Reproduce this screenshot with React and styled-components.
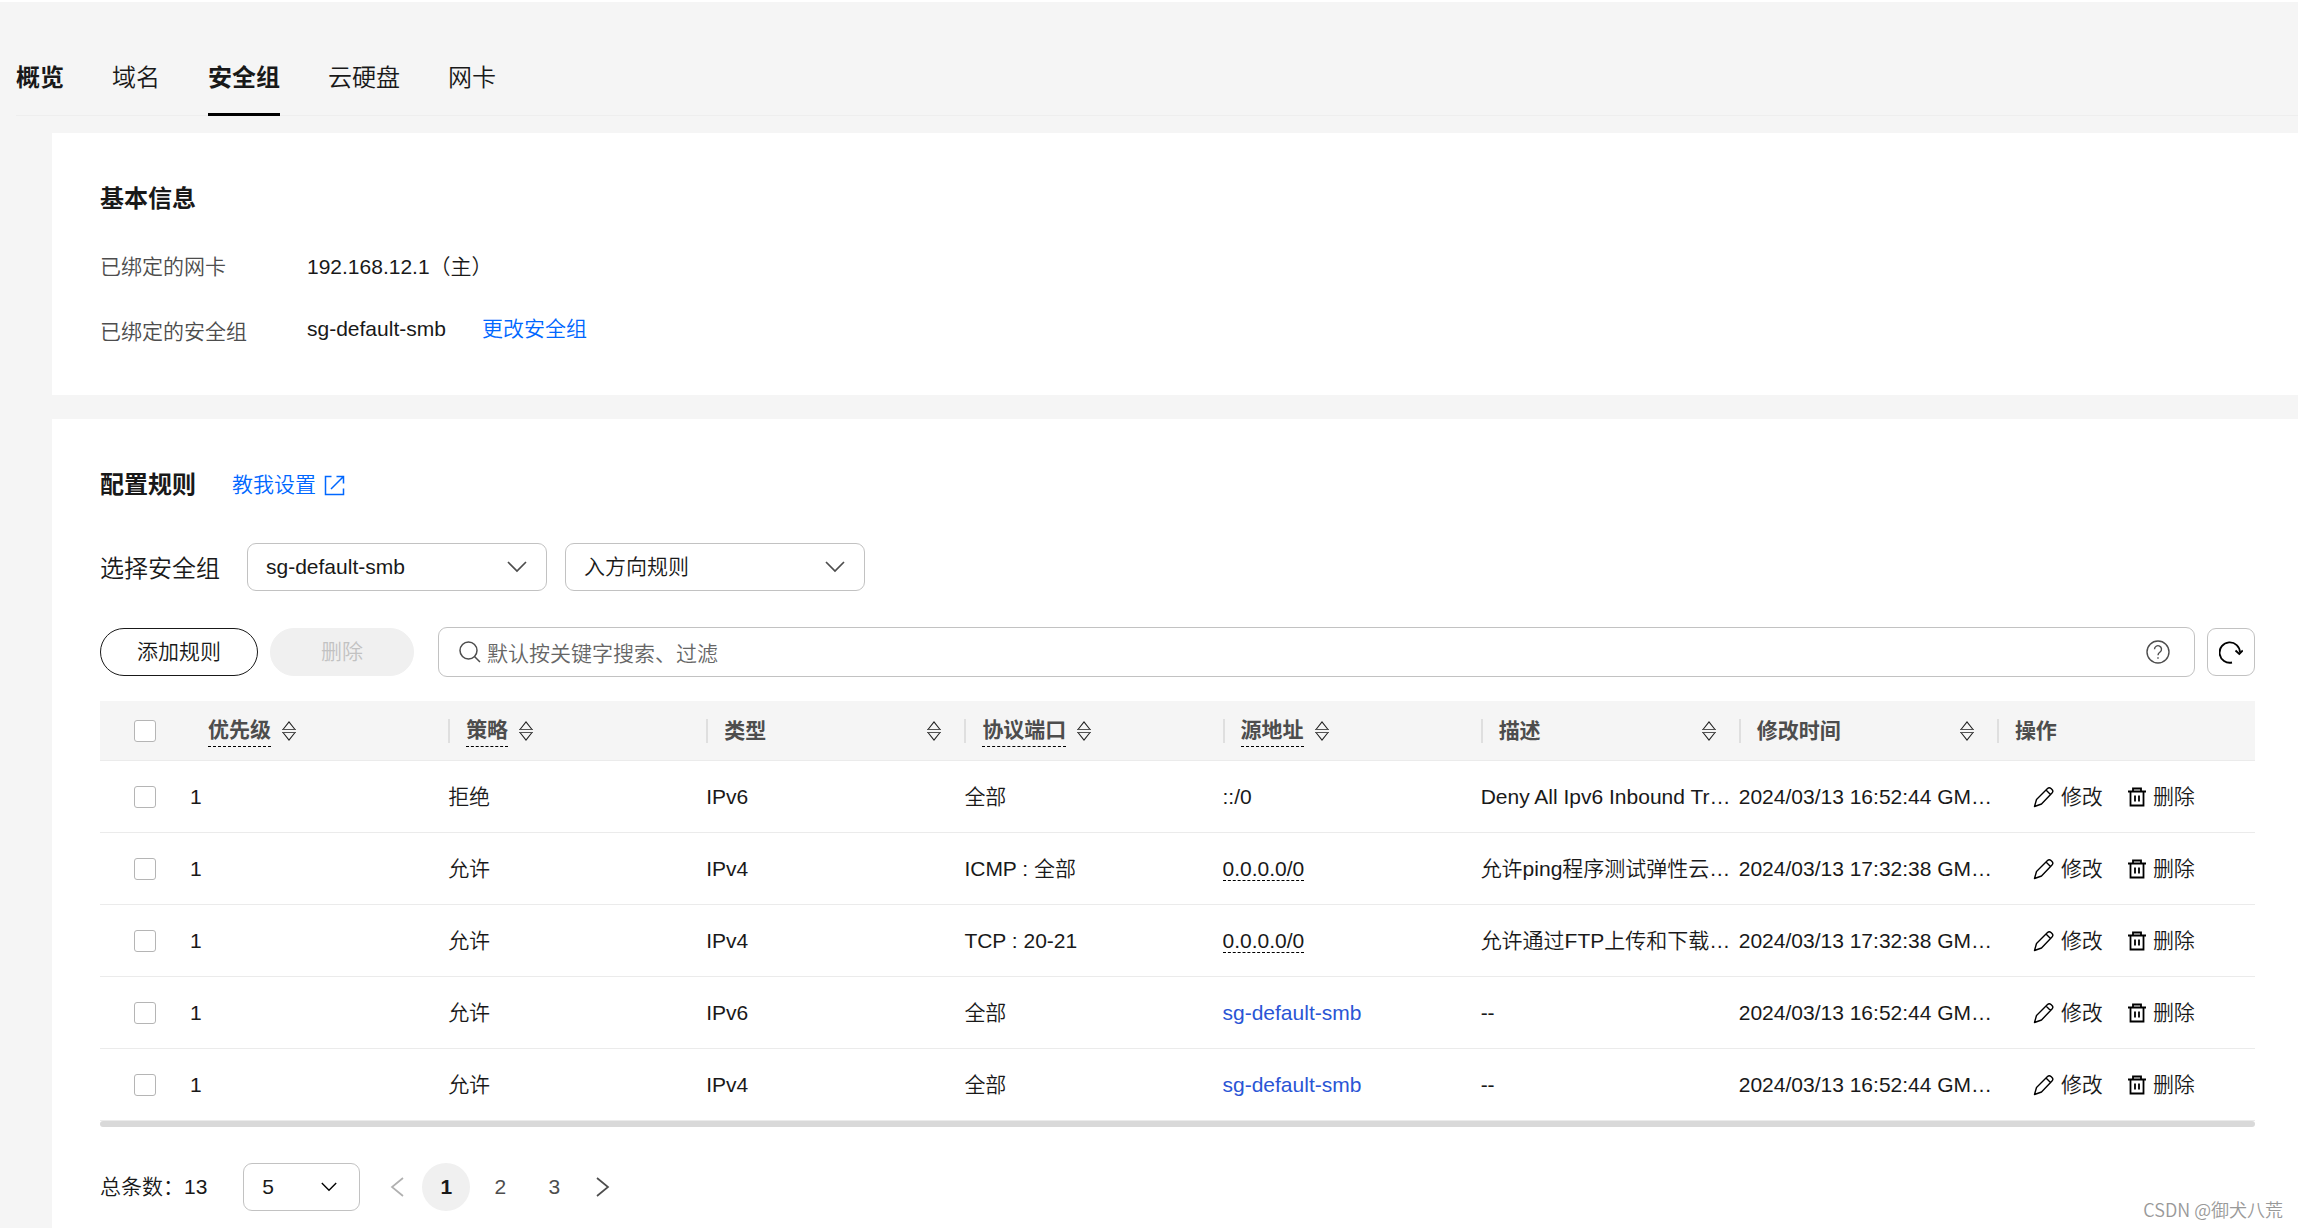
import React, { useState } from "react";
import styled, { createGlobalStyle } from "styled-components";

const GlobalStyles = createGlobalStyle`
  * {
    box-sizing: border-box;
  }

  body {
    margin: 0;
    background: #f5f5f5;
    color: #191919;
    font-family: "Liberation Sans", "Noto Sans CJK SC", sans-serif;
    font-size: 21px;
    font-weight: 350;
    line-height: 32px;
  }

  button, input, select {
    font: inherit;
    color: inherit;
  }
`;

const tabs = ["概览", "域名", "安全组", "云硬盘", "网卡"];

const columns = [
  { title: "优先级", tip: true, sort: true },
  { title: "策略", tip: true, sort: true },
  { title: "类型", sort: true },
  { title: "协议端口", tip: true, sort: true },
  { title: "源地址", tip: true, sort: true },
  { title: "描述", sort: true },
  { title: "修改时间", sort: true },
  { title: "操作" },
];

const rules = [
  { policy: "拒绝", type: "IPv6", port: "全部", source: "::/0", desc: "Deny All Ipv6 Inbound Tr…", time: "2024/03/13 16:52:44 GM…" },
  { policy: "允许", type: "IPv4", port: "ICMP : 全部", source: "0.0.0.0/0", kind: "tip", desc: "允许ping程序测试弹性云…", time: "2024/03/13 17:32:38 GM…" },
  { policy: "允许", type: "IPv4", port: "TCP : 20-21", source: "0.0.0.0/0", kind: "tip", desc: "允许通过FTP上传和下载…", time: "2024/03/13 17:32:38 GM…" },
  { policy: "允许", type: "IPv6", port: "全部", source: "sg-default-smb", kind: "link", desc: "--", time: "2024/03/13 16:52:44 GM…" },
  { policy: "允许", type: "IPv4", port: "全部", source: "sg-default-smb", kind: "link", desc: "--", time: "2024/03/13 16:52:44 GM…" },
];

const SortIcon = () => (
  <svg width="14" height="20" viewBox="0 0 14 20" fill="none" stroke="#222" strokeWidth="1.1">
    <path d="M1 8.5 7 1l6 7.5M1 11.5 7 19l6-7.5" />
    <path d="M0 8.5h14M0 11.5h14" stroke="#555" />
  </svg>
);

const Chevron = ({ color = "#4d4d4d", width = 20 }) => (
  <svg width={width} height="12" viewBox="0 0 20 12" fill="none" stroke={color} strokeWidth="1.7">
    <path d="m1 1 9 9 9-9" />
  </svg>
);

const PageArrow = ({ d, color }) => (
  <svg width="14" height="20" viewBox="0 0 14 20" fill="none" stroke={color} strokeWidth="1.7">
    <path d={d} />
  </svg>
);

const ExternalIcon = () => (
  <svg width="21" height="21" viewBox="0 0 21 21" fill="none" stroke="currentColor" strokeWidth="1.5">
    <path d="M7.5 1.5h-6v18h18v-6M12.5 1.5h7v7M19.5 1.5 7 14" />
  </svg>
);

const SearchIcon = () => (
  <svg width="22" height="22" viewBox="0 0 22 22" fill="none" stroke="#4d4d4d" strokeWidth="1.5">
    <circle cx="9.5" cy="9.5" r="8.5" />
    <path d="m15.5 15.5 5.5 5.5" />
  </svg>
);

const HelpIcon = () => (
  <svg width="24" height="24" viewBox="0 0 24 24" fill="none" stroke="#4d4d4d" strokeWidth="1.4">
    <circle cx="12" cy="12" r="11" />
    <path d="M8.5 9.2a3.5 3.5 0 1 1 5.6 2.8c-1.3 1-2.1 1.6-2.1 3.3M12 17.3v1.5" />
  </svg>
);

const RefreshIcon = () => (
  <svg width="24" height="24" viewBox="0 0 24 24" fill="none" stroke="#000" strokeWidth="1.8">
    <path d="M13 22.5A10.2 10.2 0 1 1 21 12.5" />
    <path d="M16.5 10.5 20.3 14l3.5-3.5" />
  </svg>
);

const PencilIcon = () => (
  <svg width="22" height="22" viewBox="0 0 22 22" fill="none" stroke="#000" strokeWidth="1.4" strokeLinejoin="round">
    <path d="M1.5 20.5 3.5 13.5 14.5 2.5a2.5 2.5 0 0 1 3.500 0l1 1a2.500 2.500 0 0 1 0 3.500L8.500 18ZM13 4l4.500 4.500" />
  </svg>
);

const TrashIcon = () => (
  <svg width="20" height="20" viewBox="0 0 20 20" fill="none" stroke="#000" strokeWidth="1.8">
    <path d="M1 4.5h18M6 4.5v-3h8v3M3.5 4.5v14h13v-14M8 8.5v6M12 8.5v6" />
  </svg>
);

function SelectBox({ id, label, width, small, children }) {
  return (
    <SelectWrap $width={width}>
      <Select id={id} aria-label={label}>
        {children}
      </Select>
      <SelectArrow $small={small}>
        <Chevron width={small ? 16 : 20} color={small ? "#000" : "#4d4d4d"} />
      </SelectArrow>
    </SelectWrap>
  );
}

function Source({ rule }) {
  if (rule.kind === "link") return <SourceLink href="#sg">{rule.source}</SourceLink>;
  if (rule.kind === "tip") return <SourceTip>{rule.source}</SourceTip>;
  return rule.source;
}

function App() {
  const [page, setPage] = useState(1);

  return (
    <Page>
      <GlobalStyles />
      <Tabs>
        {tabs.map((name, i) => (
          <Tab key={name} href={"#tab" + i} $bold={i === 0 || i === 2} $active={i === 2}>
            {name}
          </Tab>
        ))}
      </Tabs>

      <Panel>
        <Title>基本信息</Title>
        <InfoList>
          <dt>已绑定的网卡</dt>
          <dd>192.168.12.1（主）</dd>
          <dt>已绑定的安全组</dt>
          <BoundGroup>
            <span>sg-default-smb</span>
            <Link href="#change">更改安全组</Link>
          </BoundGroup>
        </InfoList>
      </Panel>

      <RulesPanel>
        <TitleRow>
          <Title>配置规则</Title>
          <Link href="#guide">
            教我设置
            <ExternalIcon />
          </Link>
        </TitleRow>

        <FilterRow>
          <FilterLabel htmlFor="group">选择安全组</FilterLabel>
          <SelectBox id="group" width={300}>
            <option>sg-default-smb</option>
          </SelectBox>
          <SelectBox label="规则方向" width={300}>
            <option>入方向规则</option>
            <option>出方向规则</option>
          </SelectBox>
        </FilterRow>

        <Toolbar>
          <AddButton>添加规则</AddButton>
          <DeleteButton disabled>删除</DeleteButton>
          <SearchBox>
            <SearchIcon />
            <SearchInput aria-label="搜索" placeholder="默认按关键字搜索、过滤" />
            <HelpIcon />
          </SearchBox>
          <RefreshButton aria-label="刷新">
            <RefreshIcon />
          </RefreshButton>
        </Toolbar>

        <Table>
          <colgroup>
            <CheckCol />
            {columns.map((c) => (
              <col key={c.title} />
            ))}
          </colgroup>
          <thead>
            <tr>
              <HeadCell>
                <Checkbox type="checkbox" aria-label="全选" />
              </HeadCell>
              {columns.map((c, i) => (
                <HeadCell key={c.title}>
                  <HeadInner $first={i === 0} $spread={!c.tip}>
                    {c.tip ? <HeadTip>{c.title}</HeadTip> : <span>{c.title}</span>}
                    {c.sort && (
                      <SortButton aria-label={"排序 " + c.title}>
                        <SortIcon />
                      </SortButton>
                    )}
                  </HeadInner>
                </HeadCell>
              ))}
            </tr>
          </thead>
          <tbody>
            {rules.map((rule, i) => (
              <tr key={i}>
                <Cell>
                  <Checkbox type="checkbox" aria-label={"选择第" + (i + 1) + "行"} />
                </Cell>
                <Cell>1</Cell>
                <Cell>{rule.policy}</Cell>
                <Cell>{rule.type}</Cell>
                <Cell>{rule.port}</Cell>
                <Cell>
                  <Source rule={rule} />
                </Cell>
                <Cell>{rule.desc}</Cell>
                <Cell>{rule.time}</Cell>
                <Cell>
                  <Actions>
                    <ActionButton>
                      <PencilIcon />
                      修改
                    </ActionButton>
                    <ActionButton>
                      <TrashIcon />
                      删除
                    </ActionButton>
                  </Actions>
                </Cell>
              </tr>
            ))}
          </tbody>
        </Table>
        <ScrollTrack />

        <Pagination>
          <Total>总条数：13</Total>
          <SelectBox label="每页条数" width={117} small>
            <option>5</option>
            <option>10</option>
          </SelectBox>
          <Pager>
            <ArrowButton aria-label="上一页" disabled={page === 1} onClick={() => setPage(page - 1)}>
              <PageArrow d="M13 1 2 10l11 9" color="#b0b0b0" />
            </ArrowButton>
            {[1, 2, 3].map((n) => (
              <PageButton key={n} $active={n === page} onClick={() => setPage(n)}>
                {n}
              </PageButton>
            ))}
            <ArrowButton aria-label="下一页" disabled={page === 3} onClick={() => setPage(page + 1)}>
              <PageArrow d="m1 1 11 9-11 9" color="#4d4d4d" />
            </ArrowButton>
          </Pager>
        </Pagination>
      </RulesPanel>

      <Watermark>CSDN @御犬八荒</Watermark>
    </Page>
  );
}

export default App;


const Page = styled.div`
  position: relative;
  display: flex;
  flex-direction: column;
  min-height: 100vh;
  border-top: 2px solid #fff;
`;

const Tabs = styled.nav`
  display: flex;
  gap: 48px;
  margin-left: 16px;
  margin-bottom: 17px;
  padding-top: 58px;
  box-shadow: inset 0 -1px #eee;
`;

const Tab = styled.a`
  padding-bottom: 17px;
  border-bottom: 3px solid ${(p) => (p.$active ? "#000" : "transparent")};
  color: #191919;
  font-size: 24px;
  font-weight: ${(p) => (p.$bold ? 700 : 350)};
  line-height: 36px;
  text-decoration: none;
`;

const Panel = styled.section`
  margin-left: 52px;
  padding: 48px 43px 47px 48px;
  background: #fff;
`;

const RulesPanel = styled(Panel)`
  flex: 1;
  margin-top: 24px;
  padding-bottom: 16px;
`;

const Title = styled.h2`
  margin: 0;
  font-size: 24px;
  font-weight: 700;
  line-height: 36px;
`;

const InfoList = styled.dl`
  display: grid;
  grid-template-columns: 207px 1fr;
  row-gap: 33px;
  margin: 34px 0 0;

  dt {
    color: #4d4d4d;
  }

  dd {
    margin: 0;
  }
`;

const BoundGroup = styled.dd`
  display: flex;
  align-items: flex-start;
  gap: 36px;
  line-height: 26px;
`;

const Link = styled.a`
  display: inline-flex;
  align-items: center;
  gap: 8px;
  color: #0067ff;
  text-decoration: none;
`;

const TitleRow = styled.div`
  display: flex;
  align-items: center;
  gap: 36px;
`;

const FilterRow = styled.div`
  display: flex;
  align-items: center;
  gap: 18px;
  margin-top: 40px;
`;

const FilterLabel = styled.label`
  margin-right: 9px;
  padding-top: 4px;
  font-size: 24px;
`;

const SelectWrap = styled.div`
  position: relative;
  width: ${(p) => p.$width}px;
  height: 48px;
`;

const Select = styled.select`
  appearance: none;
  width: 100%;
  height: 100%;
  padding: 0 18px;
  border: 1px solid #c2c2c2;
  border-radius: 9px;
  background: #fff;
`;

const SelectArrow = styled.span`
  position: absolute;
  top: 0;
  right: ${(p) => (p.$small ? 23 : 20)}px;
  display: flex;
  align-items: center;
  height: 100%;
  pointer-events: none;
`;

const Toolbar = styled.div`
  display: flex;
  align-items: center;
  gap: 12px;
  margin: 36px 0 24px;
`;

const AddButton = styled.button`
  width: 158px;
  height: 48px;
  padding: 0;
  border: 1px solid #191919;
  border-radius: 24px;
  background: #fff;
`;

const DeleteButton = styled(AddButton)`
  width: 144px;
  border-color: #f0f0f0;
  background: #f0f0f0;
  color: #c2c2c2;
`;

const SearchBox = styled.div`
  flex: 1;
  display: flex;
  align-items: center;
  gap: 6px;
  height: 50px;
  margin-left: 12px;
  padding: 0 24px 0 20px;
  border: 1px solid #c2c2c2;
  border-radius: 9px;
`;

const SearchInput = styled.input`
  flex: 1;
  min-width: 0;
  padding: 3px 0 0;
  border: 0;
  outline: 0;
  background: none;

  &::placeholder {
    color: #666;
    opacity: 1;
  }
`;

const RefreshButton = styled.button`
  display: flex;
  align-items: center;
  justify-content: center;
  width: 48px;
  height: 48px;
  padding: 0;
  border: 1px solid #c2c2c2;
  border-radius: 9px;
  background: #fff;
`;

const Table = styled.table`
  width: 100%;
  table-layout: fixed;
  border-collapse: separate;
  border-spacing: 0;
`;

const CheckCol = styled.col`
  width: 90px;
`;

const HeadCell = styled.th`
  height: 60px;
  padding: 0;
  border-bottom: 1px solid #ebebeb;
  background: #f5f5f5;
  color: #4d4d4d;
  font-weight: 700;
`;

const HeadInner = styled.div`
  display: flex;
  align-items: center;
  gap: 11px;
  padding-right: 23px;
  line-height: 28px;

  &::before {
    content: "";
    width: 2px;
    height: 24px;
    margin-right: 5px;
    background: ${(p) => (p.$first ? "transparent" : "#dfdfdf")};
  }

  & > span {
    margin-right: ${(p) => (p.$spread ? "auto" : 0)};
  }
`;

const HeadTip = styled.span`
  padding-top: 1px;
  padding-bottom: 2px;
  border-bottom: 1px dashed #000;
`;

const SortButton = styled.button`
  display: flex;
  padding: 0;
  border: 0;
  background: none;
`;

const Cell = styled.td`
  height: 72px;
  padding: 0;
  border-bottom: 1px solid #ebebeb;
  overflow: hidden;
  white-space: nowrap;
`;

const Checkbox = styled.input`
  appearance: none;
  display: block;
  width: 22px;
  height: 22px;
  margin: 0 auto;
  border: 1px solid #b5b5b5;
  border-radius: 3px;
  background: #fff;
`;

const SourceTip = styled.span`
  border-bottom: 1px dashed #000;
`;

const SourceLink = styled.a`
  color: #2a55d5;
  text-decoration: none;
`;

const Actions = styled.div`
  display: flex;
  gap: 24px;
  padding-left: 36px;
`;

const ActionButton = styled.button`
  display: flex;
  align-items: center;
  gap: 6px;
  padding: 0;
  border: 0;
  background: none;
`;

const ScrollTrack = styled.div`
  height: 6px;
  border-radius: 3px;
  background: #d9d9d9;
`;

const Pagination = styled.div`
  display: flex;
  align-items: center;
  margin-top: 36px;
`;

const Total = styled.span`
  margin-right: 36px;
`;

const Pager = styled.div`
  display: flex;
  gap: 6px;
  margin-left: 18px;
`;

const PageButton = styled.button`
  width: 48px;
  height: 48px;
  padding: 0;
  border: 0;
  border-radius: 50%;
  background: ${(p) => (p.$active ? "#f0f0f0" : "none")};
  color: ${(p) => (p.$active ? "#191919" : "#4d4d4d")};
  font-weight: ${(p) => (p.$active ? 700 : 400)};
`;

const ArrowButton = styled.button`
  display: flex;
  align-items: center;
  justify-content: center;
  width: 38px;
  height: 48px;
  padding: 0;
  border: 0;
  background: none;
`;

const Watermark = styled.div`
  position: absolute;
  right: 15px;
  bottom: 3px;
  color: #999;
  font-family: "Noto Sans CJK SC", sans-serif;
  font-size: 18px;
`;
